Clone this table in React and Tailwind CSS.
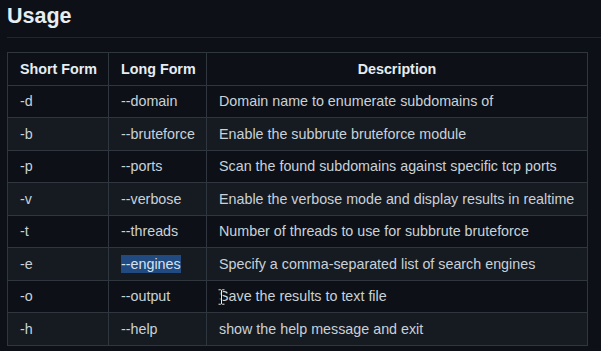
import React from "react";

const rows = [
  ["-d", "--domain", "Domain name to enumerate subdomains of"],
  ["-b", "--bruteforce", "Enable the subbrute bruteforce module"],
  ["-p", "--ports", "Scan the found subdomains against specific tcp ports"],
  ["-v", "--verbose", "Enable the verbose mode and display results in realtime"],
  ["-t", "--threads", "Number of threads to use for subbrute bruteforce"],
  ["-e", "--engines", "Specify a comma-separated list of search engines"],
  ["-o", "--output", "Save the results to text file"],
  ["-h", "--help", "show the help message and exit"],
];

function TextCursor() {
  return (
    <svg
      className="absolute left-[-1px] top-[1px]"
      width="7"
      height="16"
      viewBox="0 0 7 16"
      fill="none"
    >
      <path
        d="M0.5 0.8h2.2c0.5 0 0.8 0.4 0.8 0.8v12.8c0 0.4 0.3 0.8 0.8 0.8h2.2M6.5 0.8h-2.2c-0.5 0-0.8 0.4-0.8 0.8M3.5 14.4c0 0.4-0.3 0.8-0.8 0.8H0.5"
        stroke="#000"
        strokeWidth="2.2"
      />
      <path
        d="M0.5 0.8h2.2c0.5 0 0.8 0.4 0.8 0.8v12.8c0 0.4 0.3 0.8 0.8 0.8h2.2M6.5 0.8h-2.2c-0.5 0-0.8 0.4-0.8 0.8M3.5 14.4c0 0.4-0.3 0.8-0.8 0.8H0.5"
        stroke="#f0f0f0"
        strokeWidth="1"
      />
    </svg>
  );
}

export default function App() {
  return (
    <div
      className="w-[601px] h-[351px] overflow-hidden bg-[#0d1117] text-[#c9d1d9] pl-[7px]"
      style={{ fontFamily: '"Liberation Sans", Arial, sans-serif' }}
    >
      <h2 className="text-[21.5px] font-bold text-[#e6edf3] leading-[26px] pt-[3px] pb-[8px] border-b border-[#21262d]">
        Usage
      </h2>

      <table className="mt-[14px] w-[581px] border-collapse text-[14.3px] leading-[20px] table-fixed whitespace-nowrap">
        <thead>
          <tr className="h-[32.5px]">
            <th className="w-[101px] border border-[#30363d] px-[12px] text-left font-bold text-[#e6edf3]">
              Short Form
            </th>
            <th className="w-[98px] border border-[#30363d] px-[12px] text-left font-bold text-[#e6edf3]">
              Long Form
            </th>
            <th className="border border-[#30363d] px-[12px] text-center font-bold text-[#e6edf3]">
              Description
            </th>
          </tr>
        </thead>
        <tbody>
          {rows.map(([s, l, d], i) => (
            <tr
              key={s}
              className={`h-[32.5px] ${i % 2 === 1 ? "bg-[#161b22]" : "bg-[#0d1117]"}`}
            >
              <td className="border border-[#30363d] px-[12px]">{s}</td>
              <td className="border border-[#30363d] px-[12px]">
                {l === "--engines" ? (
                  <span className="bg-[#214a80] text-[#d8e2ee] py-[1px]">{l}</span>
                ) : (
                  l
                )}
              </td>
              <td className="border border-[#30363d] px-[12px]">
                {d === "Save the results to text file" ? (
                  <span className="relative">
                    {d}
                    <TextCursor />
                  </span>
                ) : (
                  d
                )}
              </td>
            </tr>
          ))}
        </tbody>
      </table>
    </div>
  );
}
